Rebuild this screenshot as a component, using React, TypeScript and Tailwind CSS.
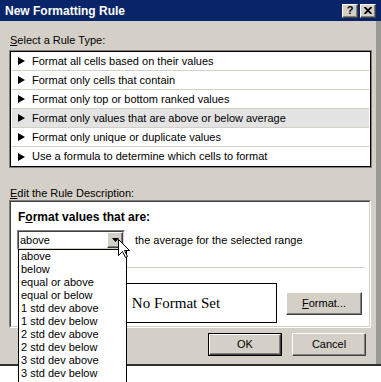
import React from 'react'

// classic win32 3d edges
const raised =
    'border border-t-white border-l-white border-r-[#404040] border-b-[#404040] shadow-[inset_-1px_-1px_0_#808080]'
const sunken =
    'border border-t-[#808080] border-l-[#808080] border-r-white border-b-white'

const ruleTypes = [
    'Format all cells based on their values',
    'Format only cells that contain',
    'Format only top or bottom ranked values',
    'Format only values that are above or below average',
    'Format only unique or duplicate values',
    'Use a formula to determine which cells to format',
]

const options = [
    'above',
    'below',
    'equal or above',
    'equal or below',
    '1 std dev above',
    '1 std dev below',
    '2 std dev above',
    '2 std dev below',
    '3 std dev above',
    '3 std dev below',
]

function Marker() {
    return (
        <svg width="7" height="8" viewBox="0 0 7 8" className="shrink-0">
            <polygon points="0,0 7,4 0,8" fill="#000" />
        </svg>
    )
}

function TitleButton({ children }: { children: React.ReactNode }) {
    return (
        <div className={`w-[16px] h-[14px] bg-[#d4d0c8] flex items-center justify-center ${raised}`}>
            {children}
        </div>
    )
}

function Button({ children, isDefault, width }: { children: React.ReactNode; isDefault?: boolean; width: string }) {
    const inner = (
        <div className={`h-full w-full bg-[#d4d0c8] flex items-center justify-center ${raised}`}>{children}</div>
    )
    if (isDefault) {
        return <div className={`${width} h-[23px] border border-black`}>{inner}</div>
    }
    return <div className={`${width} h-[23px]`}>{inner}</div>
}

export default function App() {
    return (
        <div className="relative w-[381px] h-[382px] overflow-hidden bg-white text-black text-[11px] font-['Liberation_Sans',Arial,sans-serif]">
            <div className="w-full h-[366px] flex flex-col bg-[#d4d0c8] border-b-2 border-b-[#303030]">
                {/* title bar */}
                <div className="h-[21px] bg-[#0a246a] flex items-center justify-between pl-[5px] pr-[5px] shrink-0">
                    <span className="text-white font-bold text-[12px] leading-none">New Formatting Rule</span>
                    <div className="flex gap-[2px]">
                        <TitleButton>
                            <span className="font-bold text-[11px] leading-none">?</span>
                        </TitleButton>
                        <TitleButton>
                            <svg width="8" height="7" viewBox="0 0 8 7">
                                <path d="M0.5 0 L7.5 7 M7.5 0 L0.5 7" stroke="#000" strokeWidth="1.8" />
                            </svg>
                        </TitleButton>
                    </div>
                </div>

                <div className="flex-1 flex flex-col pl-[9px] pt-[12px] border-r-[5px] border-r-[#9b9994]">
                    <div className="h-[14px] leading-[14px] pl-[1px]">
                        <span className="underline">S</span>elect a Rule Type:
                    </div>

                    {/* rule type list */}
                    <div className="mt-[3px] w-[363px] border border-[#808080]">
                        <div className="border border-black bg-white h-[116px]">
                            {ruleTypes.map((r, i) => (
                                <div
                                    key={r}
                                    className={`h-[19px] mx-[1px] flex items-center gap-[7px] pl-[6px] ${
                                        i < ruleTypes.length - 1 ? 'border-b border-b-[#d4d0c8]' : ''
                                    } ${i === 3 ? 'bg-[#e3e3e3]' : ''}`}
                                >
                                    <Marker />
                                    <span>{r}</span>
                                </div>
                            ))}
                        </div>
                    </div>

                    <div className="mt-[18px] h-[14px] leading-[14px] pl-[1px]">
                        <span className="underline">E</span>dit the Rule Description:
                    </div>

                    {/* description panel */}
                    <div className={`w-[362px] h-[128px] ${sunken}`}>
                        <div className="h-full bg-white border border-t-[#404040] border-l-[#404040] border-r-[#d4d0c8] border-b-[#d4d0c8] pl-[6px] pr-[4px] pt-[8px]">
                            <div className="h-[14px] leading-[14px] font-bold text-[12px] pl-[1px]">
                                F<span className="underline">o</span>rmat values that are:
                            </div>
                            <div className="mt-[6px] flex items-center">
                                <div className={`w-[108px] h-[20px] ${sunken}`}>
                                    <div className="h-full bg-white border border-t-[#404040] border-l-[#404040] border-r-[#d4d0c8] border-b-[#d4d0c8] flex items-center justify-between">
                                        <span className="pl-[1px]">above</span>
                                        <div className={`w-[16px] h-[16px] bg-[#d4d0c8] flex items-center justify-center ${raised}`}>
                                            <svg width="7" height="4" viewBox="0 0 7 4">
                                                <polygon points="0,0 7,0 3.5,4" fill="#000" />
                                            </svg>
                                        </div>
                                    </div>
                                </div>
                                <span className="ml-[10px]">the average for the selected range</span>
                            </div>
                            <div className="mt-[17px] h-px bg-[#d4d0c8]" />
                            <div className="mt-[15px] flex items-center">
                                {/* preview label sits under the open dropdown */}
                                <div className="w-[58px]" />
                                <div className="w-[202px] h-[40px] border border-black flex items-center justify-center font-['Liberation_Serif','Times_New_Roman',serif] text-[15px]">
                                    No Format Set
                                </div>
                                <div className="ml-[9px]">
                                    <Button width="w-[76px]">
                                        <span>
                                            <span className="underline">F</span>ormat...
                                        </span>
                                    </Button>
                                </div>
                            </div>
                        </div>
                    </div>

                    <div className="mt-[5px] flex justify-end gap-[10px] pr-[10px]">
                        <Button isDefault width="w-[74px]">
                            OK
                        </Button>
                        <Button width="w-[74px]">Cancel</Button>
                    </div>
                </div>
            </div>

            {/* open dropdown */}
            <div className="absolute left-[18px] top-[249px] w-[109px] h-[140px] bg-white border border-black">
                {options.map(o => (
                    <div key={o} className="h-[13px] leading-[13px] pl-[2px]">
                        {o}
                    </div>
                ))}
            </div>

            {/* mouse pointer */}
            <svg className="absolute left-[118px] top-[239px]" width="12" height="19" viewBox="0 0 12 19">
                <path d="M0.5 0.5 V16.5 L4.5 12.5 L7.5 18.5 L9.5 17.5 L6.5 11.5 H11.5 Z" fill="#fff" stroke="#000" />
            </svg>
        </div>
    )
}
